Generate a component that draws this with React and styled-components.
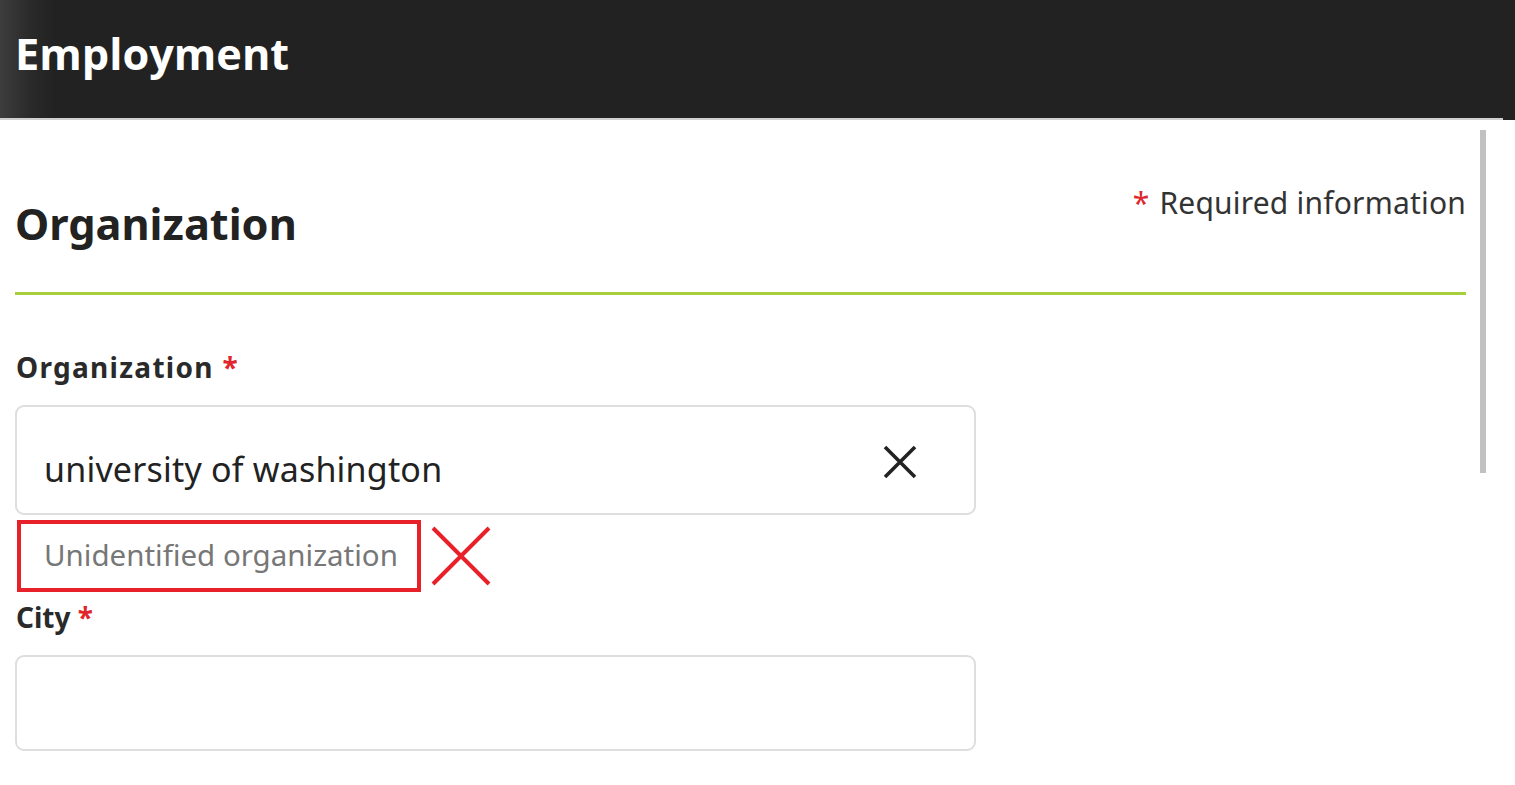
import React from 'react'
import styled, { createGlobalStyle } from 'styled-components'

const GlobalStyle = createGlobalStyle`
  body {
    margin: 0;
    background: #fff;
    font-family: "Noto Sans", "Open Sans", sans-serif;
    color: #222;
  }
`

const Page = styled.div`
  position: relative;
  width: 1515px;
  height: 785px;
  overflow: hidden;
  background: #fff;
`

const Header = styled.header`
  height: 120px;
  box-sizing: border-box;
  display: flex;
  align-items: center;
  padding: 0 0 11px 15px;
  background: linear-gradient(to right, #3d3d3d 0, #2a2a2a 30px, #222 55px);
  border-bottom: 2px solid #cfcfcf;
  margin-right: 12px;
  position: relative;
`

const HeaderCorner = styled.div`
  position: absolute;
  top: 0;
  right: -12px;
  width: 12px;
  height: 120px;
  background: #222;
`

const Title = styled.h1`
  margin: 0;
  color: #fff;
  font-family: "Open Sans", sans-serif;
  font-size: 43.3px;
  font-weight: 700;
`

const Scrollbar = styled.div`
  position: absolute;
  top: 130px;
  left: 1480px;
  width: 6px;
  height: 343px;
  background: #c1c1c1;
`

const Main = styled.main`
  width: 1451px;
  padding: 0 0 0 15px;
`

const SectionHead = styled.div`
  display: flex;
  justify-content: space-between;
  align-items: flex-start;
  padding-top: 70px;
  height: 102px;
  border-bottom: 3px solid #a6cf3b;
`

const SectionTitle = styled.h2`
  margin: 6px 0 0 0;
  font-size: 43.3px;
  font-weight: 700;
  line-height: 56px;
  color: #222;
`

const Required = styled.div`
  margin-top: -8px;
  font-size: 30px;
  letter-spacing: 0.2px;
  color: #333;
  white-space: nowrap;
`

const Star = styled.span`
  color: #e0252c;
  margin-right: ${p => p.gap || 0}px;
`

const Field = styled.div`
  display: flex;
  flex-direction: column;
  margin-top: ${p => p.top}px;
`

const Label = styled.label`
  margin-left: 1px;
  font-size: 28px;
  font-weight: 700;
  letter-spacing: ${p => p.spacing || 0}px;
  line-height: 36px;
  color: #2a2a2a;
`

const InputBox = styled.div`
  width: 961px;
  height: ${p => p.h}px;
  margin-top: ${p => p.top}px;
  box-sizing: border-box;
  border: 2px solid #dedede;
  border-radius: 9px;
  display: flex;
  align-items: center;
  justify-content: space-between;
  padding: 18px 56px 0 27px;
`

const InputText = styled.span`
  font-size: 34px;
  letter-spacing: 0.2px;
  color: #222;
`

const ClearButton = styled.button`
  border: 0;
  background: none;
  padding: 0;
  margin-top: -14px;
  display: flex;
  cursor: pointer;
`

const HintRow = styled.div`
  display: flex;
  align-items: center;
  gap: 9px;
  margin-top: 5px;
  margin-left: 2px;
`

const HintBox = styled.div`
  width: 404px;
  height: 72px;
  flex-shrink: 0;
  box-sizing: border-box;
  border: 4px solid #e8202a;
  display: flex;
  align-items: center;
  padding: 0 0 4px 23px;
  font-size: 29.5px;
  color: #777;
`

function App() {
  return (
    <Page>
      <GlobalStyle />
      <Header>
        <Title>Employment</Title>
        <HeaderCorner />
      </Header>
      <Scrollbar />
      <Main>
        <SectionHead>
          <SectionTitle>Organization</SectionTitle>
          <Required>
            <Star gap={10}>*</Star>Required information
          </Required>
        </SectionHead>

        <Field top={54}>
          <Label spacing={1.3}>
            Organization <Star>*</Star>
          </Label>
          <InputBox h={110} top={20}>
            <InputText>university of washington</InputText>
            <ClearButton aria-label="Clear">
              <svg width="36" height="36" viewBox="0 0 36 36">
                <path d="M3 3 L33 33 M33 3 L3 33" stroke="#222" strokeWidth="3.6" />
              </svg>
            </ClearButton>
          </InputBox>
          <HintRow>
            <HintBox>Unidentified organization</HintBox>
            <svg width="62" height="62" viewBox="0 0 62 62">
              <path d="M3 3 L59 59 M59 3 L3 59" stroke="#e8202a" strokeWidth="4" />
            </svg>
          </HintRow>
        </Field>

        <Field top={7}>
          <Label>
            City <Star>*</Star>
          </Label>
          <InputBox h={96} top={20} />
        </Field>
      </Main>
    </Page>
  )
}

export default App
